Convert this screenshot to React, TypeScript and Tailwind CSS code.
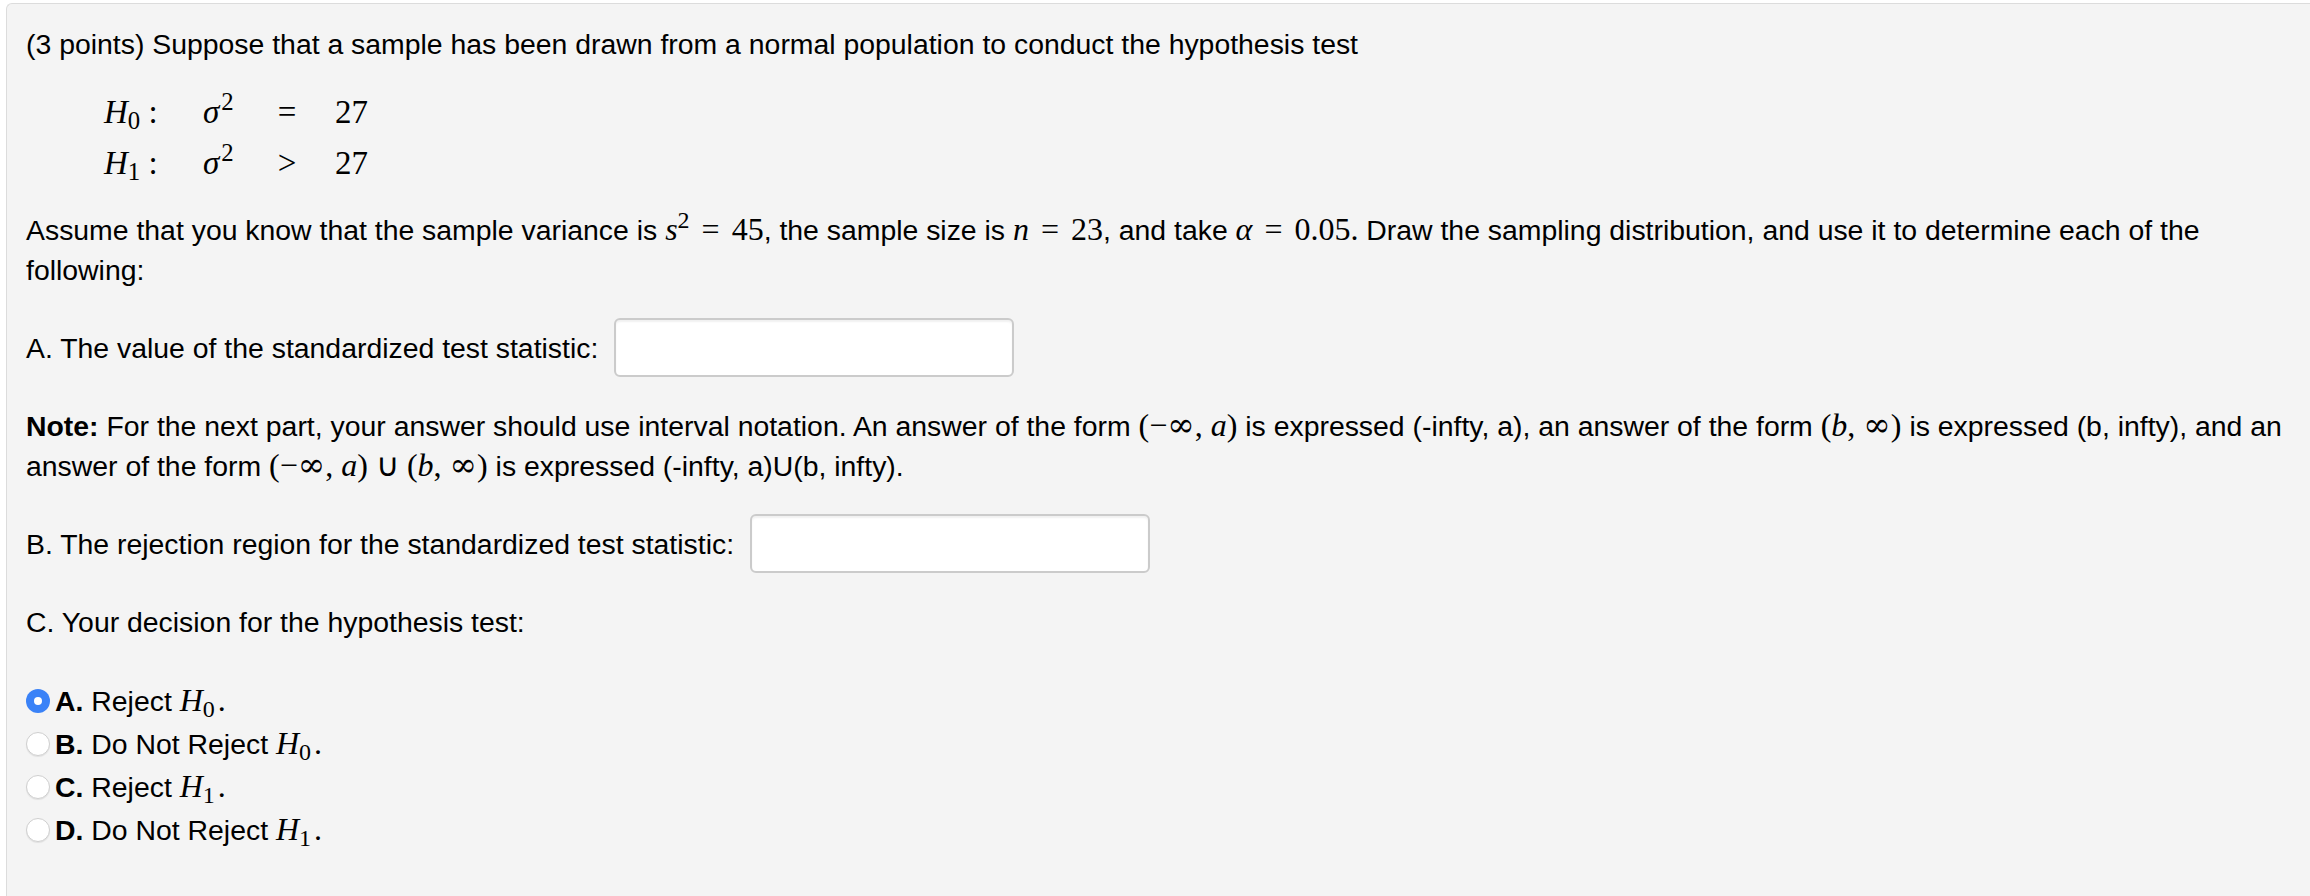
import React from 'react';

function M({ children }: { children: React.ReactNode }) {
  return (
    <span className="font-['Liberation_Serif','Times_New_Roman',serif] text-[32px] leading-none">{children}</span>
  );
}

function Eq({ op = '=' }: { op?: string }) {
  return <span className="mx-[12px]">{op}</span>;
}

function Inf() {
  return <span className="font-['DejaVu_Serif',serif] text-[33px] leading-none">∞</span>;
}

function H({ n }: { n: string }) {
  return (
    <M>
      <span className="italic">H</span>
      <sub>{n}</sub>
    </M>
  );
}

function Radio({ checked }: { checked?: boolean }) {
  if (checked) {
    return (
      <span className="w-[24px] h-[24px] rounded-full bg-[#3a82f7] flex items-center justify-center shrink-0">
        <span className="w-[8px] h-[8px] rounded-full bg-white" />
      </span>
    );
  }
  return (
    <span className="w-[24px] h-[24px] rounded-full bg-white border border-[#cfcfcf] shadow-[0_1px_1px_rgba(0,0,0,0.08)] shrink-0" />
  );
}

export default function App() {
  const options = [
    { key: 'A.', text: 'Reject', h: '0', checked: true },
    { key: 'B.', text: 'Do Not Reject', h: '0' },
    { key: 'C.', text: 'Reject', h: '1' },
    { key: 'D.', text: 'Do Not Reject', h: '1' },
  ];

  return (
    <div className="min-h-screen bg-white pt-[3px] pl-[6px] overflow-hidden">
      <div className="min-h-[893px] bg-[#f4f4f4] border-t border-l border-[#dcdcdc] rounded-tl-[6px] pl-[19px] pr-[6px] pt-[20px] font-['Liberation_Sans',Arial,sans-serif] text-[28.4px] leading-[40px] text-black">
        {/* Intro */}
        <p>(3 points) Suppose that a sample has been drawn from a normal population to conduct the hypothesis test</p>

        {/* Hypotheses */}
        <div className="mt-[22px] ml-[78px] font-['Liberation_Serif','Times_New_Roman',serif] text-[33px]">
          {[
            { h: '0', op: '=' },
            { h: '1', op: '>' },
          ].map((row) => (
            <div key={row.h} className="flex items-center h-[51px]">
              <span className="w-[99px]">
                <span className="italic">H</span>
                <sub>{row.h}</sub> :
              </span>
              <span className="w-[62px]">
                <span className="italic">σ</span>
                <sup className="ml-[2px]">2</sup>
              </span>
              <span className="w-[44px] text-center">{row.op}</span>
              <span className="ml-[26px]">27</span>
            </div>
          ))}
        </div>

        <p className="mt-[22px]">
          Assume that you know that the sample variance is{' '}
          <M>
            <span className="italic">s</span>
            <sup>2</sup>
            <Eq />
            45
          </M>
          , the sample size is{' '}
          <M>
            <span className="italic">n</span>
            <Eq />
            23
          </M>
          , and take{' '}
          <M>
            <span className="italic">α</span>
            <Eq />
            0.05.
          </M>{' '}
          Draw the sampling distribution, and use it to determine each of the following:
        </p>

        {/* Part A */}
        <div className="mt-[28px] flex items-center">
          <span>A. The value of the standardized test statistic:</span>
          <input
            type="text"
            className="ml-[16px] w-[400px] h-[59px] rounded-[6px] border-2 border-[#cbcbcb] bg-white shadow-[inset_0_2px_2px_rgba(0,0,0,0.06)] outline-none"
          />
        </div>

        {/* Note */}
        <p className="mt-[29px]">
          <b>Note:</b> For the next part, your answer should use interval notation. An answer of the form{' '}
          <M>
            (−<Inf />, <span className="italic">a</span>)
          </M>{' '}
          is expressed (-infty, a), an answer of the form{' '}
          <M>
            (<span className="italic">b</span>, <Inf />)
          </M>{' '}
          is expressed (b, infty), and an answer of the form{' '}
          <M>
            (−<Inf />, <span className="italic">a</span>) ∪ (<span className="italic">b</span>, <Inf />)
          </M>{' '}
          is expressed (-infty, a)U(b, infty).
        </p>

        {/* Part B */}
        <div className="mt-[28px] flex items-center">
          <span>B. The rejection region for the standardized test statistic:</span>
          <input
            type="text"
            className="ml-[16px] w-[400px] h-[59px] rounded-[6px] border-2 border-[#cbcbcb] bg-white shadow-[inset_0_2px_2px_rgba(0,0,0,0.06)] outline-none"
          />
        </div>

        {/* Part C */}
        <p className="mt-[29px]">C. Your decision for the hypothesis test:</p>

        <div className="mt-[37px]">
          {options.map((o) => (
            <div key={o.key} className="flex items-center h-[43px]">
              <Radio checked={o.checked} />
              <span className="ml-[5px]">
                <b>{o.key}</b> {o.text} <H n={o.h} />
                <M>
                  <span className="ml-[3px]">.</span>
                </M>
              </span>
            </div>
          ))}
        </div>
      </div>
    </div>
  );
}
